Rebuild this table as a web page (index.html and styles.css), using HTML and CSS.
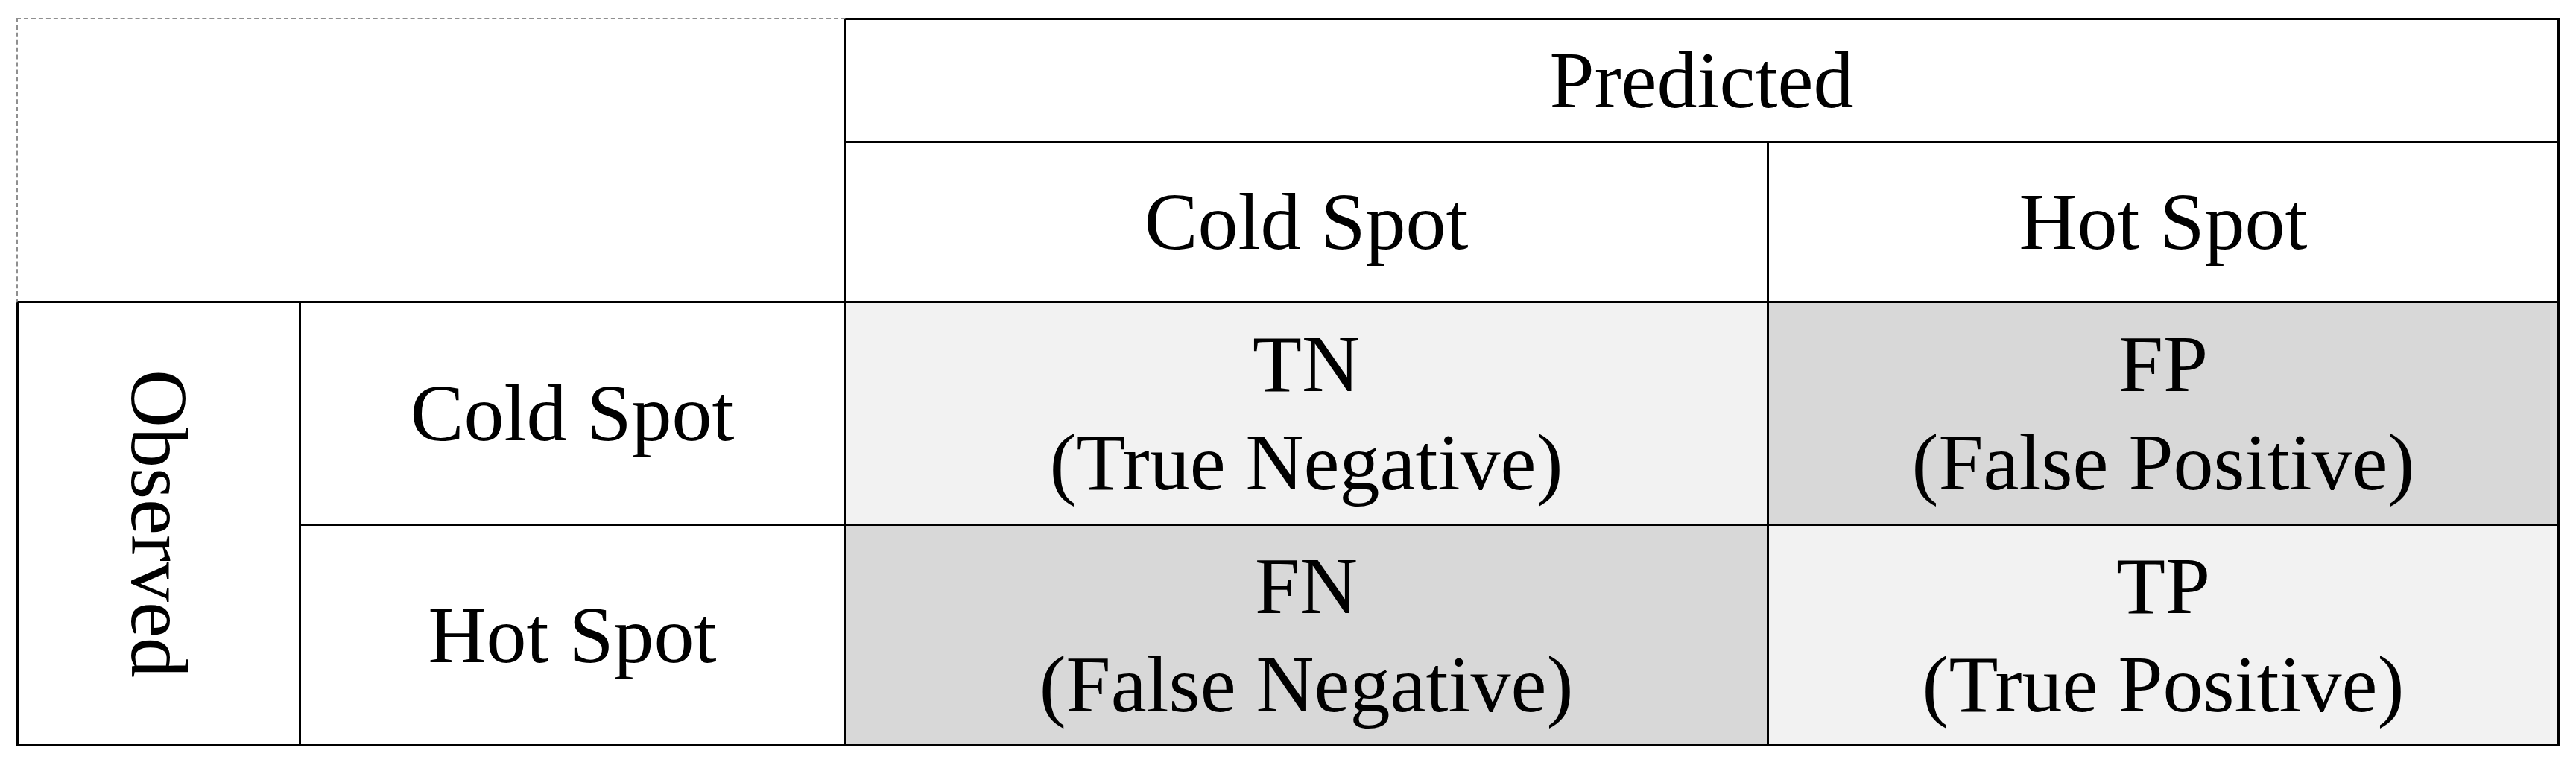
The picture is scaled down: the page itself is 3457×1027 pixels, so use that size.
FILE: index.html
```html
<!DOCTYPE html>
<html lang="en">
<head>
<meta charset="utf-8">
<title>Confusion matrix</title>
<link rel="stylesheet" href="styles.css">
</head>
<body>
<div class="matrix">
  <div class="cell corner"></div>
  <div class="cell predicted">Predicted</div>
  <div class="cell head">Cold Spot</div>
  <div class="cell head">Hot Spot</div>
  <div class="cell observed"><span class="vtext">Observed</span></div>
  <div class="cell label">Cold Spot</div>
  <div class="cell light">TN<br>(True Negative)</div>
  <div class="cell dark">FP<br>(False Positive)</div>
  <div class="cell label">Hot Spot</div>
  <div class="cell dark">FN<br>(False Negative)</div>
  <div class="cell light">TP<br>(True Positive)</div>
</div>
</body>
</html>
```
FILE: styles.css
```css
html, body {
  margin: 0;
  padding: 0;
  background: #ffffff;
}

body {
  font-family: "Liberation Serif", "Times New Roman", serif;
  color: #000000;
}

.matrix {
  display: grid;
  grid-template-columns: 382px 731px 1239px 1061px;
  grid-template-rows: 168px 215px 299px 296px;
  margin: 24px 0 0 22px;
  width: 3413px;
}

.cell {
  box-sizing: border-box;
  display: flex;
  align-items: center;
  justify-content: center;
  text-align: center;
  font-size: 108px;
  line-height: 132px;
  border-right: 3px solid #000;
  border-bottom: 3px solid #000;
  background: #ffffff;
}

.corner {
  grid-column: 1 / 3;
  grid-row: 1 / 3;
  border-top: 2px dashed #8f8f8f;
  border-left: 2px dashed #8f8f8f;
}

.predicted {
  grid-column: 3 / 5;
  grid-row: 1;
  border-top: 3px solid #000;
}

.observed {
  grid-column: 1;
  grid-row: 3 / 5;
  border-left: 3px solid #000;
}

.vtext {
  writing-mode: vertical-rl;
  line-height: 1;
}

.light {
  background: #f2f2f2;
}

.dark {
  background: #d8d8d8;
}
```
